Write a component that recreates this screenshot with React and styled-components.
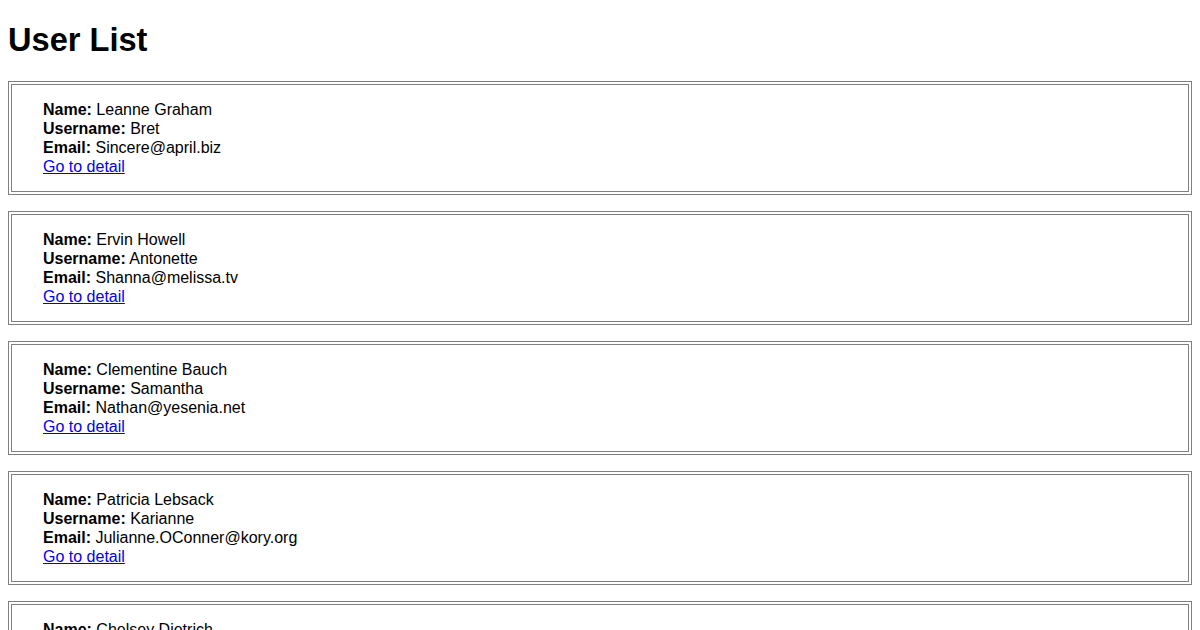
import React from "react";
import styled, { createGlobalStyle } from "styled-components";

const Global = createGlobalStyle`
  html, body { margin: 0; padding: 0; background: #fff; }
  body {
    font-family: "Liberation Sans", Arial, sans-serif;
    font-size: 16px;
    color: #000;
  }
`;

const Page = styled.div`
  padding: 8px 8px 0;
`;

const Title = styled.h1`
  font-size: 32.6px;
  line-height: 38px;
  font-weight: bold;
  margin: 13.44px 0 21.56px;
`;

const Card = styled.div`
  border: 1px solid #808080;
  padding: 2px;
  margin: 16px 0;
`;

const Inner = styled.div`
  border: 1px solid #808080;
  padding: 15px 31px;
  line-height: 19px;
`;

const Row = styled.div``;

const Label = styled.b`
  font-weight: bold;
`;

const DetailLink = styled.a`
  color: #0000ee;
  text-decoration: underline;
`;

const users = [
  { name: "Leanne Graham", username: "Bret", email: "Sincere@april.biz" },
  { name: "Ervin Howell", username: "Antonette", email: "Shanna@melissa.tv" },
  { name: "Clementine Bauch", username: "Samantha", email: "Nathan@yesenia.net" },
  { name: "Patricia Lebsack", username: "Karianne", email: "Julianne.OConner@kory.org" },
  { name: "Chelsey Dietrich", username: "Kamren", email: "Lucio_Hettinger@annie.ca" },
];

export default function App() {
  return (
    <Page>
      <Global />
      <Title>User List</Title>
      {users.map((u, i) => (
        <Card key={i}>
          <Inner>
            <Row><Label>Name:</Label> {u.name}</Row>
            <Row><Label>Username:</Label> {u.username}</Row>
            <Row><Label>Email:</Label> {u.email}</Row>
            <Row><DetailLink href="#">Go to detail</DetailLink></Row>
          </Inner>
        </Card>
      ))}
    </Page>
  );
}
